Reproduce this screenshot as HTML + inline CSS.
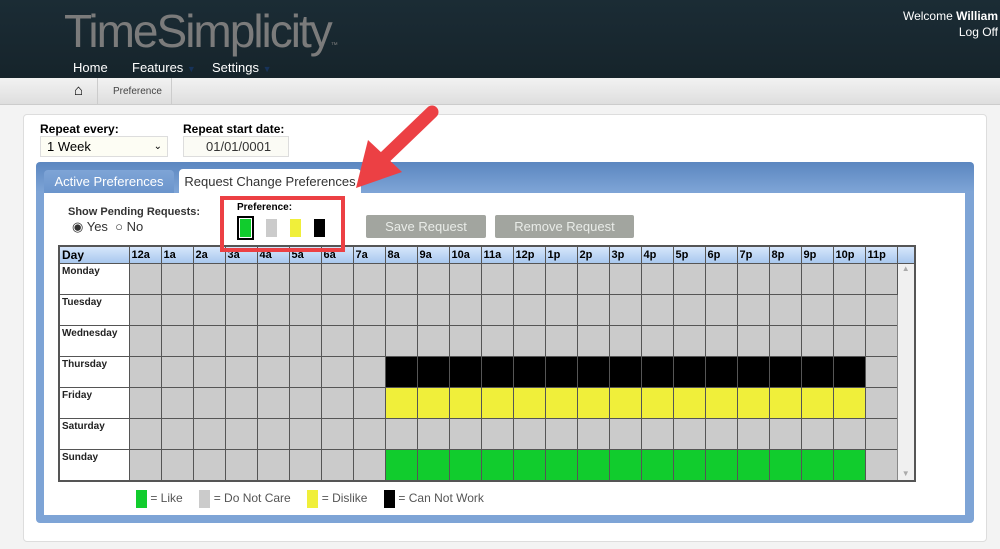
<!DOCTYPE html><html><head><style>
body{margin:0;width:1000px;height:549px;overflow:hidden;background:#f3f3f3;font-family:"Liberation Sans",sans-serif;position:relative}
.a{position:absolute}
.hdr{left:0;top:0;width:1000px;height:78px;background:linear-gradient(#1b2c35,#16242b)}
.logo{left:64px;top:4px;font-size:46px;color:#7b7b7b;letter-spacing:-2px}
.nav{top:60px;color:#fff;font-size:13px}
.bc{left:0;top:78px;width:1000px;height:26px;background:linear-gradient(#f2f2f2,#dedede);border-bottom:1px solid #ccc}
table{border-collapse:collapse;table-layout:fixed;width:858px}
td{border:1px solid #555;height:30px;background:#cbcbcb;padding:0;overflow:hidden;white-space:nowrap}
td.d{background:#fff;font-size:10px;font-weight:bold;vertical-align:top;padding:2px 2px 0;height:28px;color:#222}
tr.h td{height:16px;background:linear-gradient(#d6e6fb,#a9c8ee);font-size:11px;font-weight:bold;vertical-align:middle;padding:0 2px;color:#000}
td.k{background:#000}td.y{background:#f0ef3a}td.g{background:#11cc2d}
td.s{background:#f0f0f0;border-top:none;border-bottom:none;border-right:none;border-left:1px solid #888}
.btn{top:215px;height:23px;background:#a2a59f;color:#e9ece8;font-size:13px;text-align:center;line-height:23px;border-radius:2px}
.sw{width:11px;height:18px}
</style></head><body>
<div class="a hdr"></div>
<div class="a logo">TimeSimplicity<span style="font-size:7px;letter-spacing:0">™</span></div>
<div class="a nav" style="left:73px">Home</div>
<div class="a nav" style="left:132px">Features <span style="color:#17335a;font-size:9px">▼</span></div>
<div class="a nav" style="left:212px">Settings <span style="color:#17335a;font-size:9px">▼</span></div>
<div class="a" style="right:2px;top:8px;color:#fff;font-size:12px;text-align:right;line-height:16px">Welcome <b>William</b><br>Log Off</div>
<div class="a bc"></div>
<div class="a" style="left:74px;top:82px;font-size:15px">⌂</div>
<div class="a" style="left:97px;top:78px;width:1px;height:26px;background:#ccc"></div>
<div class="a" style="left:113px;top:86px;font-size:10px;color:#444">Preference</div>
<div class="a" style="left:171px;top:78px;width:1px;height:26px;background:#ccc"></div>
<div class="a" style="left:23px;top:114px;width:962px;height:426px;background:#fff;border:1px solid #ddd;border-radius:4px"></div>
<div class="a" style="left:40px;top:122px;font-size:12px;font-weight:bold">Repeat every:</div>
<div class="a" style="left:40px;top:136px;width:128px;height:21px;background:#fdfdf4;border:1px solid #ddd;font-size:13px;line-height:20px;padding-left:6px;box-sizing:border-box">1 Week<span style="position:absolute;right:5px;font-size:10px">⌄</span></div>
<div class="a" style="left:183px;top:122px;font-size:12px;font-weight:bold">Repeat start date:</div>
<div class="a" style="left:183px;top:136px;width:106px;height:21px;background:#fbfbf5;border:1px solid #ddd;font-size:13px;line-height:20px;padding-left:22px;box-sizing:border-box;color:#333">01/01/0001</div>
<div class="a" style="left:36px;top:162px;width:938px;height:361px;background:linear-gradient(#5b86c0,#7ea4d6 30px,#7ea4d6);border-radius:4px"></div>
<div class="a" style="left:44px;top:170px;width:130px;height:23px;background:linear-gradient(#7ea4d6,#6b95cc);border-radius:4px 4px 0 0;color:#fff;font-size:13px;line-height:24px;text-align:center">Active Preferences</div>
<div class="a" style="left:179px;top:169px;width:182px;height:25px;background:#fff;border-radius:4px 4px 0 0;font-size:13px;line-height:26px;text-align:center;color:#333">Request Change Preferences</div>
<div class="a" style="left:44px;top:193px;width:921px;height:322px;background:#fff"></div>
<div class="a" style="left:68px;top:206px;font-size:11px;font-weight:bold;color:#333">Show Pending Requests:</div>
<div class="a" style="left:72px;top:219px;font-size:13px;color:#333">◉ Yes &nbsp;○ No</div>
<div class="a" style="left:237px;top:202px;font-size:10px;font-weight:bold">Preference:</div>
<div class="a" style="left:237px;top:216px;width:17px;height:24px;border:2px solid #000;box-sizing:border-box"></div>
<div class="a sw" style="left:240px;top:219px;background:#11cc2d"></div>
<div class="a sw" style="left:266px;top:219px;background:#cbcbcb"></div>
<div class="a sw" style="left:290px;top:219px;background:#f0ef3a"></div>
<div class="a sw" style="left:314px;top:219px;background:#000"></div>
<div class="a btn" style="left:366px;width:120px">Save Request</div>
<div class="a btn" style="left:495px;width:139px">Remove Request</div>
<table class="a" style="left:58px;top:245px;border:2px solid #555">
<colgroup><col style="width:70px"><col span="24" style="width:32px"><col style="width:18px"></colgroup>
<tr class="h"><td class="d" style="font-size:12px;padding:0 2px">Day</td><td>12a</td><td>1a</td><td>2a</td><td>3a</td><td>4a</td><td>5a</td><td>6a</td><td>7a</td><td>8a</td><td>9a</td><td>10a</td><td>11a</td><td>12p</td><td>1p</td><td>2p</td><td>3p</td><td>4p</td><td>5p</td><td>6p</td><td>7p</td><td>8p</td><td>9p</td><td>10p</td><td>11p</td><td style="background:linear-gradient(#d6e6fb,#a9c8ee)"></td></tr>
<tr><td class="d">Monday</td><td></td><td></td><td></td><td></td><td></td><td></td><td></td><td></td><td></td><td></td><td></td><td></td><td></td><td></td><td></td><td></td><td></td><td></td><td></td><td></td><td></td><td></td><td></td><td></td><td class="s" rowspan="7" style="vertical-align:top;color:#aaa;font-size:8px;text-align:center;position:relative">▲<div style="position:absolute;bottom:2px;width:100%">▼</div></td></tr>
<tr><td class="d">Tuesday</td><td></td><td></td><td></td><td></td><td></td><td></td><td></td><td></td><td></td><td></td><td></td><td></td><td></td><td></td><td></td><td></td><td></td><td></td><td></td><td></td><td></td><td></td><td></td><td></td></tr>
<tr><td class="d">Wednesday</td><td></td><td></td><td></td><td></td><td></td><td></td><td></td><td></td><td></td><td></td><td></td><td></td><td></td><td></td><td></td><td></td><td></td><td></td><td></td><td></td><td></td><td></td><td></td><td></td></tr>
<tr><td class="d">Thursday</td><td></td><td></td><td></td><td></td><td></td><td></td><td></td><td></td><td class="k"></td><td class="k"></td><td class="k"></td><td class="k"></td><td class="k"></td><td class="k"></td><td class="k"></td><td class="k"></td><td class="k"></td><td class="k"></td><td class="k"></td><td class="k"></td><td class="k"></td><td class="k"></td><td class="k"></td><td></td></tr>
<tr><td class="d">Friday</td><td></td><td></td><td></td><td></td><td></td><td></td><td></td><td></td><td class="y"></td><td class="y"></td><td class="y"></td><td class="y"></td><td class="y"></td><td class="y"></td><td class="y"></td><td class="y"></td><td class="y"></td><td class="y"></td><td class="y"></td><td class="y"></td><td class="y"></td><td class="y"></td><td class="y"></td><td></td></tr>
<tr><td class="d">Saturday</td><td></td><td></td><td></td><td></td><td></td><td></td><td></td><td></td><td></td><td></td><td></td><td></td><td></td><td></td><td></td><td></td><td></td><td></td><td></td><td></td><td></td><td></td><td></td><td></td></tr>
<tr><td class="d">Sunday</td><td></td><td></td><td></td><td></td><td></td><td></td><td></td><td></td><td class="g"></td><td class="g"></td><td class="g"></td><td class="g"></td><td class="g"></td><td class="g"></td><td class="g"></td><td class="g"></td><td class="g"></td><td class="g"></td><td class="g"></td><td class="g"></td><td class="g"></td><td class="g"></td><td class="g"></td><td></td></tr>
</table>
<div class="a" style="left:220px;top:196px;width:125px;height:56px;border:4px solid #ec4044;box-sizing:border-box"></div>
<svg class="a" style="left:340px;top:100px" width="110" height="100"><line x1="92" y1="12" x2="40" y2="62" stroke="#ec4044" stroke-width="13" stroke-linecap="round"/><polygon points="16,88 28,40 62,72" fill="#ec4044"/></svg>
<div class="a" style="left:136px;top:489px;font-size:12px;color:#555;line-height:18px;white-space:nowrap">
<span style="display:inline-block;width:11px;height:18px;background:#11cc2d;vertical-align:middle"></span> = Like &nbsp;&nbsp;&nbsp;
<span style="display:inline-block;width:11px;height:18px;background:#cbcbcb;vertical-align:middle"></span> = Do Not Care &nbsp;&nbsp;&nbsp;
<span style="display:inline-block;width:11px;height:18px;background:#f0ef3a;vertical-align:middle"></span> = Dislike &nbsp;&nbsp;&nbsp;
<span style="display:inline-block;width:11px;height:18px;background:#000;vertical-align:middle"></span> = Can Not Work</div>
</body></html>
